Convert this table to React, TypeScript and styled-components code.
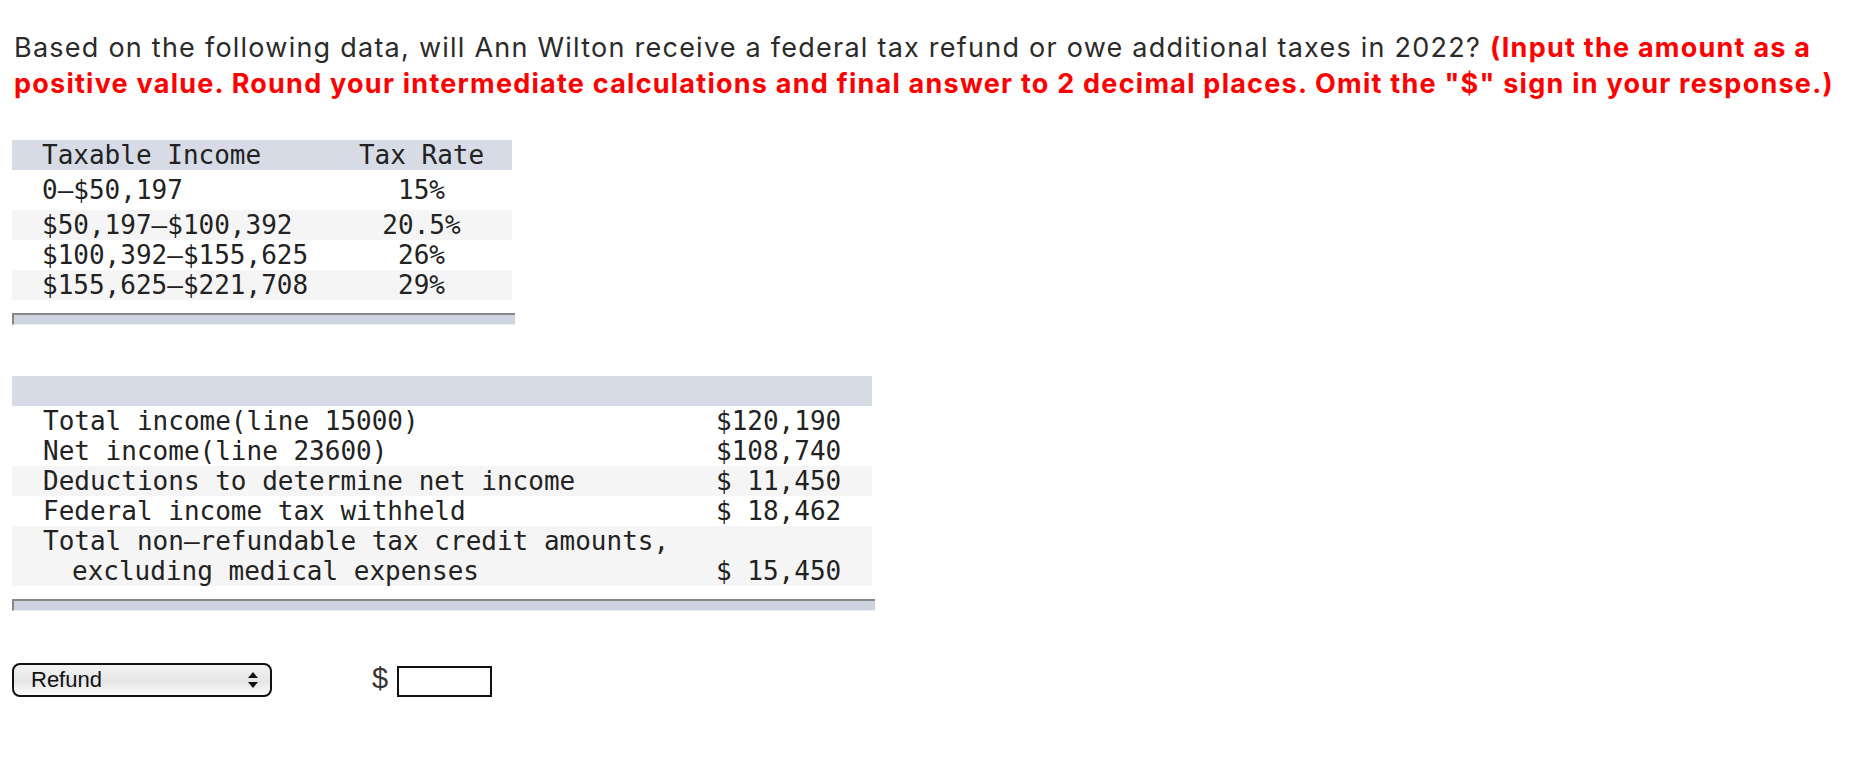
import React from "react";
import styled, { createGlobalStyle } from "styled-components";

const GlobalStyle = createGlobalStyle`
  html, body { margin: 0; padding: 0; background: #ffffff; }
  body { width: 1856px; min-height: 772px; }
`;

const Page = styled.div`
  padding: 30px 0 0 12px;
  display: flex;
  flex-direction: column;
  align-items: flex-start;
`;

const Question = styled.p`
  margin: 0 0 38px 2px;
  font-family: "Inter", "Liberation Sans", sans-serif;
  font-size: 27px;
  line-height: 36px;
  letter-spacing: 1.24px;
  color: #2b2b2b;
  white-space: nowrap;
`;

const Emphasis = styled.strong`
  color: #ff0000;
  font-weight: 700;
  letter-spacing: 1.24px;
`;

const Table = styled.div<{ $cols: string; $width: number }>`
  display: grid;
  grid-template-columns: ${(p) => p.$cols};
  width: ${(p) => p.$width}px;
  font-family: "DejaVu Sans Mono", "Liberation Mono", monospace;
  font-size: 26px;
  color: #222222;
`;

const Cell = styled.div<{
  $bg?: "head" | "stripe" | "plain";
  $align?: "left" | "center";
  $pad?: number;
  $height?: number;
}>`
  background: ${(p) =>
    p.$bg === "head" ? "#d6dbe6" : p.$bg === "stripe" ? "#f5f5f5" : "#ffffff"};
  text-align: ${(p) => p.$align ?? "left"};
  padding-left: ${(p) => p.$pad ?? 0}px;
  height: ${(p) => p.$height ?? 30}px;
  line-height: 30px;
  display: flex;
  flex-direction: column;
  justify-content: center;
  white-space: pre;
`;

const Indent = styled.span`
  padding-left: 29px;
`;

const Scrollbar = styled.div<{ $width: number }>`
  box-sizing: border-box;
  width: ${(p) => p.$width}px;
  height: 12px;
  margin-top: 13px;
  background: #cdd3df;
  border-top: 2px solid #878787;
  border-left: 2px solid #878787;
  border-bottom: 1px solid #e8eef8;
`;

const Spacer = styled.div<{ $h: number }>`
  height: ${(p) => p.$h}px;
`;

const AnswerRow = styled.div`
  display: flex;
  align-items: flex-start;
  margin-top: 52px;
`;

const FakeSelect = styled.div`
  box-sizing: border-box;
  width: 260px;
  height: 34px;
  border: 2px solid #111111;
  border-radius: 8px;
  background: linear-gradient(#f3f3f3 0%, #e6e6e6 55%, #fbfbfb 100%);
  display: flex;
  align-items: center;
  justify-content: space-between;
  padding: 0 11px 0 17px;
  font-family: "Liberation Sans", Arial, sans-serif;
  font-size: 22px;
  color: #111111;
`;

const Dollar = styled.span`
  margin-left: 100px;
  font-family: "Liberation Sans", Arial, sans-serif;
  font-size: 29px;
  line-height: 31px;
  color: #333333;
`;

const AmountInput = styled.input`
  box-sizing: border-box;
  margin: 3px 0 0 9px;
  width: 95px;
  height: 31px;
  border: 2px solid #111111;
  border-radius: 0;
  background: #ffffff;
  padding: 0 4px;
  font-size: 18px;
  outline: none;
`;

const Arrows = () => (
  <svg width="12" height="20" viewBox="0 0 12 20" aria-hidden="true">
    <path d="M6 2 L11 8 L1 8 Z" fill="#111" />
    <path d="M6 18 L11 12 L1 12 Z" fill="#111" />
  </svg>
);

const rates: [string, string][] = [
  ["0–$50,197", "15%"],
  ["$50,197–$100,392", "20.5%"],
  ["$100,392–$155,625", "26%"],
  ["$155,625–$221,708", "29%"],
];

type DataRow = { label: React.ReactNode; value: string; stripe: boolean; h: number };

const data: DataRow[] = [
  { label: "Total income(line 15000)", value: "$120,190", stripe: false, h: 30 },
  { label: "Net income(line 23600)", value: "$108,740", stripe: false, h: 30 },
  { label: "Deductions to determine net income", value: "$ 11,450", stripe: true, h: 30 },
  { label: "Federal income tax withheld", value: "$ 18,462", stripe: false, h: 30 },
  {
    label: (
      <>
        <span>Total non–refundable tax credit amounts,</span>
        <Indent>excluding medical expenses</Indent>
      </>
    ),
    value: "$ 15,450",
    stripe: true,
    h: 60,
  },
];

export default function App() {
  return (
    <>
      <GlobalStyle />
      <Page>
        <Question>
          Based on the following data, will Ann Wilton receive a federal tax refund or owe
          additional taxes in 2022?{" "}
          <Emphasis>
            (Input the amount as a
            <br />
            positive value. Round your intermediate calculations and final answer to 2
            decimal places. Omit the "$" sign in your response.)
          </Emphasis>
        </Question>

        <Table $cols="319px 181px" $width={500}>
          <Cell $bg="head" $pad={30}>Taxable Income</Cell>
          <Cell $bg="head" $align="center">Tax Rate</Cell>
          {rates.map(([range, rate], i) => {
            const bg = i % 2 === 1 ? "stripe" : "plain";
            const h = i === 0 ? 40 : 30;
            return (
              <React.Fragment key={range}>
                <Cell $bg={bg} $pad={30} $height={h}>{range}</Cell>
                <Cell $bg={bg} $align="center" $height={h}>{rate}</Cell>
              </React.Fragment>
            );
          })}
        </Table>
        <Scrollbar $width={503} />

        <Spacer $h={51} />

        <Table $cols="704px 156px" $width={860}>
          <Cell $bg="head" />
          <Cell $bg="head" />
          {data.map((row, i) => {
            const bg = row.stripe ? "stripe" : "plain";
            return (
              <React.Fragment key={i}>
                <Cell $bg={bg} $pad={31} $height={row.h}>{row.label}</Cell>
                <Cell $bg={bg} $height={row.h}>
                  {row.h > 30 ? (
                    <>
                      <span> </span>
                      <span>{row.value}</span>
                    </>
                  ) : (
                    row.value
                  )}
                </Cell>
              </React.Fragment>
            );
          })}
        </Table>
        <Scrollbar $width={863} />

        <AnswerRow>
          <FakeSelect>
            <span>Refund</span>
            <Arrows />
          </FakeSelect>
          <Dollar>$</Dollar>
          <AmountInput type="text" aria-label="amount" />
        </AnswerRow>
      </Page>
    </>
  );
}
